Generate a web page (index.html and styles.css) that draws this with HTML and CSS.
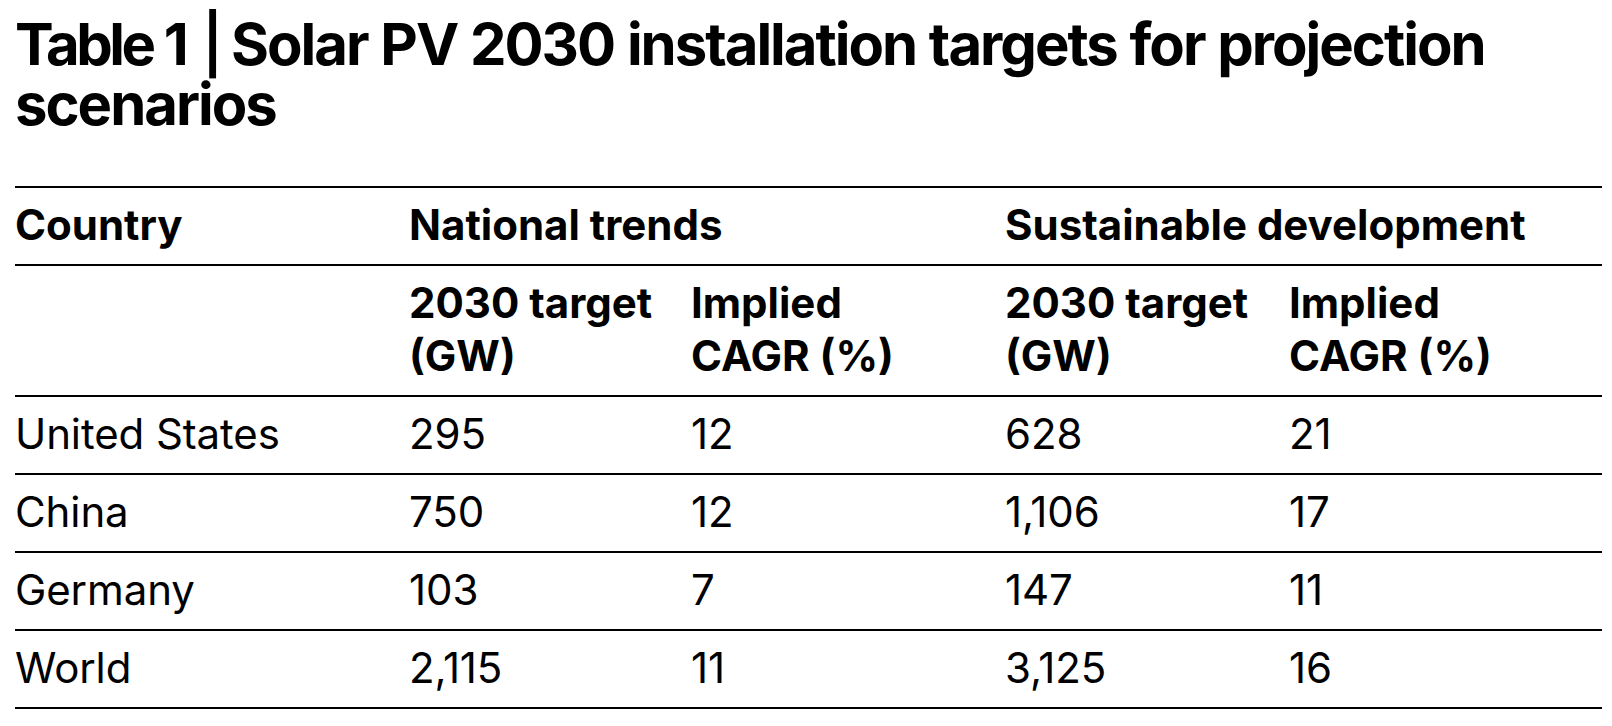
FILE: index.html
```html
<!DOCTYPE html>
<html lang="en">
<head>
<meta charset="utf-8">
<title>Table 1 | Solar PV 2030 installation targets for projection scenarios</title>
<link rel="stylesheet" href="styles.css">
</head>
<body>
<main class="page">
  <h1 class="title"><span class="lead">Table 1</span><span class="bar">|</span>Solar PV 2030 installation targets for projection scenarios</h1>
  <table class="data">
    <colgroup>
      <col class="c1"><col class="c2"><col class="c3"><col class="c4"><col class="c5">
    </colgroup>
    <thead>
      <tr class="hrow">
        <th>Country</th>
        <th colspan="2">National trends</th>
        <th colspan="2">Sustainable development</th>
      </tr>
      <tr class="hrow">
        <th></th>
        <th>2030 target<br>(GW)</th>
        <th>Implied<br>CAGR (%)</th>
        <th>2030 target<br>(GW)</th>
        <th>Implied<br>CAGR (%)</th>
      </tr>
    </thead>
    <tbody>
      <tr><td>United States</td><td>295</td><td>12</td><td>628</td><td>21</td></tr>
      <tr><td>China</td><td>750</td><td>12</td><td>1,106</td><td>17</td></tr>
      <tr><td>Germany</td><td>103</td><td>7</td><td>147</td><td>11</td></tr>
      <tr><td>World</td><td>2,115</td><td>11</td><td>3,125</td><td>16</td></tr>
    </tbody>
  </table>
</main>
</body>
</html>
```

FILE: styles.css
```css
html, body {
  margin: 0;
  padding: 0;
  background: #ffffff;
}

body {
  font-family: Inter, "Noto Sans", "Liberation Sans", sans-serif;
  color: #000000;
}

.page {
  padding: 14px 10px 0 15px;
}

.title {
  margin: 0;
  font-size: 58px;
  line-height: 60px;
  font-weight: 700;
  letter-spacing: -2px;
  word-spacing: 1px;
}

.lead {
  letter-spacing: -3.5px;
}

.bar {
  display: inline-block;
  font-weight: 600;
  letter-spacing: 0;
  margin: 0 8px 0 17px;
}

.data {
  margin-top: 52px;
  width: 1587px;
  border-collapse: collapse;
  table-layout: fixed;
  font-size: 42px;
  line-height: 53px;
}

.c1 { width: 394px; }
.c2 { width: 282px; }
.c3 { width: 314px; }
.c4 { width: 284px; }
.c5 { width: 313px; }

.data th,
.data td {
  padding: 10px 0 13px 0;
  text-align: left;
  vertical-align: top;
  border-top: 2px solid #000;
  border-bottom: 2px solid #000;
}

.data th {
  font-weight: 700;
  letter-spacing: 0;
}

.data td {
  font-weight: 400;
  letter-spacing: -0.1px;
}
```
